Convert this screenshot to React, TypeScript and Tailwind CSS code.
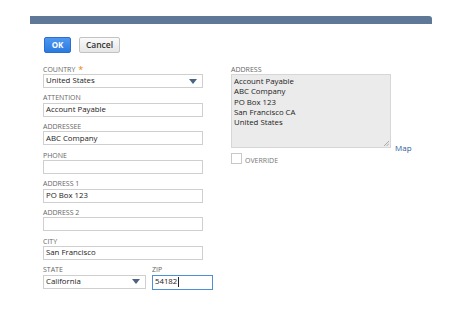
const font = { fontFamily: '"Open Sans", "Liberation Sans", sans-serif' };

function Label({ text, required }: { text: string; required?: boolean }) {
    return (
        <div className="flex h-[10px] items-center text-[7px] uppercase leading-none text-[#666]">
            {text}
            {required && <span className="ml-[3px] text-[9px] text-[#e5860b]">*</span>}
        </div>
    );
}

function Arrow() {
    return (
        <svg width="8" height="5" viewBox="0 0 8 5" className="shrink-0">
            <path d="M0 0 L8 0 L4 5 Z" fill="#4b6280" />
        </svg>
    );
}

function Select({ value, width }: { value: string; width: string }) {
    return (
        <div
            className={`flex h-[14px] ${width} items-center justify-between border border-[#cfcfcf] bg-white pl-[2px] pr-[5px] text-[7.8px] text-[#222]`}
        >
            <span>{value}</span>
            <Arrow />
        </div>
    );
}

function TextField({ value, width = 'w-[160px]' }: { value?: string; width?: string }) {
    return (
        <div
            className={`flex h-[14px] ${width} items-center border border-[#cfcfcf] bg-white px-[2px] text-[7.8px] text-[#222]`}
        >
            {value}
        </div>
    );
}

function Field({ label, children, required }: { label: string; children: React.ReactNode; required?: boolean }) {
    return (
        <div className="flex flex-col">
            <Label text={label} required={required} />
            {children}
        </div>
    );
}

export default function App() {
    return (
        <div className="h-[310px] w-[474px] bg-white" style={font}>
            <div className="px-[30px] pt-[16px]">
                <div className="h-[8px] w-[402px] rounded-tr-[3px] bg-[#5f7898]" />
            </div>

            <div className="mt-[13px] flex gap-[8px] pl-[44px]">
                <button className="h-[16px] w-[27px] rounded-[2px] border border-[#2a6fd0] bg-gradient-to-b from-[#4f98f0] to-[#2b7ae0] text-[8px] font-bold text-white">
                    OK
                </button>
                <button className="h-[16px] w-[41px] rounded-[2px] border border-[#c2c2c2] bg-gradient-to-b from-[#fafafa] to-[#e6e6e6] text-[8.5px] font-semibold text-[#333]">
                    Cancel
                </button>
            </div>

            <div className="mt-[11px] flex gap-[28px] pl-[43px]">
                <div className="flex w-[160px] shrink-0 flex-col gap-[4.7px]">
                    <Field label="Country" required>
                        <Select value="United States" width="w-[160px]" />
                    </Field>
                    <Field label="Attention">
                        <TextField value="Account Payable" />
                    </Field>
                    <Field label="Addressee">
                        <TextField value="ABC Company" />
                    </Field>
                    <Field label="Phone">
                        <TextField />
                    </Field>
                    <Field label="Address 1">
                        <TextField value="PO Box 123" />
                    </Field>
                    <Field label="Address 2">
                        <TextField />
                    </Field>
                    <Field label="City">
                        <TextField value="San Francisco" />
                    </Field>
                    <div className="flex w-[170px] gap-[6px]">
                        <Field label="State">
                            <Select value="California" width="w-[103px]" />
                        </Field>
                        <Field label="Zip">
                            <div className="flex h-[15px] w-[61px] items-center border-[1.5px] border-[#4f8fd6] bg-white px-[2px] text-[7.8px] text-[#222]">
                                54182
                                <span className="ml-[0.5px] h-[10px] w-px bg-[#222]" />
                            </div>
                        </Field>
                    </div>
                </div>

                <div className="flex flex-col">
                    <Label text="Address" />
                    <div className="flex items-end gap-[4px]">
                        <div className="relative h-[74px] w-[160px] border border-[#d6d6d6] bg-[#ebebeb] px-[2px] pt-[1px] text-[7.8px] leading-[10.3px] text-[#222]">
                            <div>Account Payable</div>
                            <div>ABC Company</div>
                            <div>PO Box 123</div>
                            <div>San Francisco CA</div>
                            <div>United States</div>
                            <svg width="6" height="6" viewBox="0 0 6 6" className="absolute bottom-[1px] right-[1px]">
                                <path d="M1 6 L6 1 M3.5 6 L6 3.5" stroke="#999" strokeWidth="0.8" />
                            </svg>
                        </div>
                        <span className="mb-[-6px] text-[8px] text-[#2f5d9b]">Map</span>
                    </div>
                    <div className="mt-[5px] flex items-center gap-[3px]">
                        <div className="h-[11px] w-[11px] border border-[#c8c8c8] bg-white" />
                        <span className="mt-[3px] text-[7px] uppercase leading-none text-[#777]">Override</span>
                    </div>
                </div>
            </div>
        </div>
    );
}
